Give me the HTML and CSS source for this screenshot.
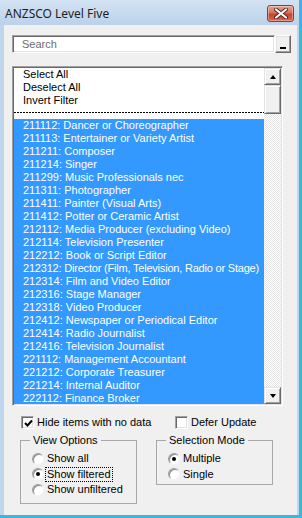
FILE: index.html
```html
<!DOCTYPE html>
<html>
<head>
<meta charset="utf-8">
<link rel="stylesheet" href="styles.css">
</head>
<body>
<div class="window">
  <div class="titlebar">
    <span class="title">ANZSCO Level Five</span>
    <div class="close">
      <svg width="14" height="11" viewBox="0 0 14 11">
        <path d="M2 1.5 L12 9.5 M12 1.5 L2 9.5" stroke="#5a2020" stroke-width="4" stroke-linecap="round"/>
        <path d="M2 1.5 L12 9.5 M12 1.5 L2 9.5" stroke="#fff" stroke-width="2.2" stroke-linecap="round"/>
      </svg>
    </div>
  </div>
  <div class="client">
    <div class="search-row">
      <div class="search">Search</div>
      <div class="btn-min"><span class="bar"></span></div>
    </div>
    <div class="listbox">
      <div class="items">
        <div class="item">Select All</div>
        <div class="item">Deselect All</div>
        <div class="item">Invert Filter</div>
        <div class="sep"></div>
        <div class="item sel">211112: Dancer or Choreographer</div>
        <div class="item sel">211113: Entertainer or Variety Artist</div>
        <div class="item sel">211211: Composer</div>
        <div class="item sel">211214: Singer</div>
        <div class="item sel">211299: Music Professionals nec</div>
        <div class="item sel">211311: Photographer</div>
        <div class="item sel">211411: Painter (Visual Arts)</div>
        <div class="item sel">211412: Potter or Ceramic Artist</div>
        <div class="item sel">212112: Media Producer (excluding Video)</div>
        <div class="item sel">212114: Television Presenter</div>
        <div class="item sel">212212: Book or Script Editor</div>
        <div class="item sel tight">212312: Director (Film, Television, Radio or Stage)</div>
        <div class="item sel">212314: Film and Video Editor</div>
        <div class="item sel">212316: Stage Manager</div>
        <div class="item sel">212318: Video Producer</div>
        <div class="item sel">212412: Newspaper or Periodical Editor</div>
        <div class="item sel">212414: Radio Journalist</div>
        <div class="item sel">212416: Television Journalist</div>
        <div class="item sel">221112: Management Accountant</div>
        <div class="item sel">221212: Corporate Treasurer</div>
        <div class="item sel">221214: Internal Auditor</div>
        <div class="item sel">222112: Finance Broker</div>
      </div>
      <div class="scrollbar">
        <div class="sb-btn"><span class="arrow up"></span></div>
        <div class="sb-thumb"></div>
        <div class="sb-track"></div>
        <div class="sb-btn"><span class="arrow down"></span></div>
      </div>
    </div>
    <div class="checks">
      <div class="check-item first">
        <span class="checkbox">
          <svg width="9" height="9" viewBox="0 0 9 9"><path d="M1 4 L3.5 6.5 L8 1.5" fill="none" stroke="#000" stroke-width="2"/></svg>
        </span>
        <span class="check-label">Hide items with no data</span>
      </div>
      <div class="check-item">
        <span class="checkbox"></span>
        <span class="check-label">Defer Update</span>
      </div>
    </div>
    <div class="groups">
      <fieldset class="group view">
        <legend>View Options</legend>
        <div class="radio-row"><span class="radio"></span><span class="rlabel">Show all</span></div>
        <div class="radio-row"><span class="radio on"></span><span class="rlabel focus">Show filtered</span></div>
        <div class="radio-row"><span class="radio"></span><span class="rlabel">Show unfiltered</span></div>
      </fieldset>
      <fieldset class="group mode">
        <legend>Selection Mode</legend>
        <div class="radio-row"><span class="radio on"></span><span class="rlabel">Multiple</span></div>
        <div class="radio-row"><span class="radio"></span><span class="rlabel">Single</span></div>
      </fieldset>
    </div>
  </div>
</div>
</body>
</html>
```

FILE: styles.css
```css
* { box-sizing: border-box; }
html, body { margin: 0; padding: 0; }
body {
  width: 302px;
  height: 518px;
  background: #3bb7df;
  font-family: "Liberation Sans", Arial, sans-serif;
  font-size: 11px;
  color: #000;
  overflow: hidden;
}
.window {
  width: 299px;
  height: 515px;
  background: #bfd5ec;
  display: flex;
  flex-direction: column;
}
.titlebar {
  height: 25px;
  flex: none;
  display: flex;
  align-items: center;
  justify-content: space-between;
  padding: 0 5px 0 5px;
  background: linear-gradient(#d3e2f3, #bcd2ea);
}
.title {
  font-family: "Noto Sans", "Liberation Sans", sans-serif;
  font-size: 12px;
  color: #1e1e1e;
  margin-top: 1px;
}
.close {
  width: 27px;
  height: 17px;
  margin-top: 2px;
  border: 1px solid #8a3d33;
  border-radius: 3px;
  background: linear-gradient(#e8a493 0%, #d4725b 45%, #c7442a 55%, #d46a4a 100%);
  display: flex;
  align-items: center;
  justify-content: center;
  box-shadow: inset 0 0 0 1px rgba(255,255,255,0.35);
}
.client {
  flex: 1;
  margin: 0 2px 0 4px;
  background: #f0f0f0;
  padding: 10px 0 0 8px;
}
.search-row {
  display: flex;
  height: 18px;
}
.search {
  width: 263px;
  height: 18px;
  background: #fff;
  border: 1px solid;
  border-color: #a0a0a0 #fff #fff #a0a0a0;
  box-shadow: inset 1px 1px 0 #696969, inset -1px -1px 0 #e3e3e3;
  color: #6d6d6d;
  padding-left: 9px;
  line-height: 16px;
  font-size: 11px;
}
.btn-min {
  width: 16px;
  height: 18px;
  background: #f0f0f0;
  border: 1px solid;
  border-color: #fff #696969 #696969 #fff;
  box-shadow: inset -1px -1px 0 #a0a0a0, inset 1px 1px 0 #e3e3e3;
  display: flex;
  justify-content: center;
  align-items: flex-end;
  padding-bottom: 3px;
}
.bar {
  width: 6px;
  height: 2px;
  background: #000;
}
.listbox {
  margin-top: 13px;
  width: 271px;
  height: 340px;
  border: 1px solid;
  border-color: #a0a0a0 #fff #fff #a0a0a0;
  box-shadow: inset 1px 1px 0 #696969, inset -1px -1px 0 #e3e3e3;
  background: #fff;
  display: flex;
  padding: 1px;
}
.items {
  width: 250px;
  overflow: hidden;
}
.item {
  height: 13px;
  line-height: 13px;
  padding-left: 9px;
  white-space: nowrap;
  overflow: hidden;
}
.item.tight { letter-spacing: -0.2px; }
.item.sel {
  background: #3399ff;
  color: #fff;
}
.sep {
  height: 12px;
  padding-top: 5px;
}
.sep::before {
  content: "";
  display: block;
  height: 1px;
  background: repeating-linear-gradient(to right, #000 0 2px, transparent 2px 3px);
}
.scrollbar {
  width: 17px;
  display: flex;
  flex-direction: column;
  background: repeating-conic-gradient(#fff 0 25%, #e4e4e4 0 50%) 0 0 / 2px 2px;
}
.sb-btn, .sb-thumb {
  background: #f0f0f0;
  border: 1px solid;
  border-color: #e3e3e3 #696969 #696969 #e3e3e3;
  box-shadow: inset 1px 1px 0 #fff, inset -1px -1px 0 #a0a0a0;
}
.sb-btn {
  height: 17px;
  flex: none;
  display: flex;
  align-items: center;
  justify-content: center;
}
.sb-thumb {
  height: 29px;
  flex: none;
}
.sb-track { flex: 1; }
.arrow {
  width: 0;
  height: 0;
  border-left: 3.5px solid transparent;
  border-right: 3.5px solid transparent;
}
.arrow.up { border-bottom: 4px solid #000; }
.arrow.down { border-top: 4px solid #000; }
.checks {
  margin: 10px 0 0 9px;
  display: flex;
  height: 13px;
}
.check-item {
  display: flex;
  align-items: center;
}
.check-item.first { width: 154px; }
.checkbox {
  width: 13px;
  height: 13px;
  background: #fff;
  border: 1px solid;
  border-color: #a0a0a0 #fff #fff #a0a0a0;
  box-shadow: inset 1px 1px 0 #696969, inset -1px -1px 0 #e3e3e3;
  display: flex;
  align-items: center;
  justify-content: center;
  padding: 1px 0 0 1px;
}
.check-label {
  margin-left: 3px;
  line-height: 13px;
}
.groups {
  margin: 5px 0 0 8px;
  display: flex;
  align-items: flex-start;
  gap: 19px;
}
.group {
  margin: 0;
  width: 117px;
  border: 1px solid #a8a8a8;
  padding: 4px 4px 5px 11px;
}
.group.mode { padding-bottom: 2px; }
.group legend {
  padding: 0 3px;
  margin-left: -2px;
  line-height: 13px;
  height: 13px;
}
.radio-row {
  height: 15.5px;
  display: flex;
  align-items: center;
}
.radio {
  width: 12px;
  height: 12px;
  border-radius: 50%;
  background: #fff;
  border: 1px solid;
  border-color: #a0a0a0 #f4f4f4 #f4f4f4 #a0a0a0;
  box-shadow: inset 1px 1px 0 #8a8a8a;
  display: flex;
  align-items: center;
  justify-content: center;
  flex: none;
}
.radio.on::after {
  content: "";
  width: 4px;
  height: 4px;
  border-radius: 50%;
  background: #000;
}
.rlabel {
  margin-left: 3px;
  line-height: 13px;
}
.rlabel.focus {
  margin-left: 1px;
  padding: 0 1px;
  border: 1px dotted #000;
  height: 15px;
  line-height: 13px;
}
```
